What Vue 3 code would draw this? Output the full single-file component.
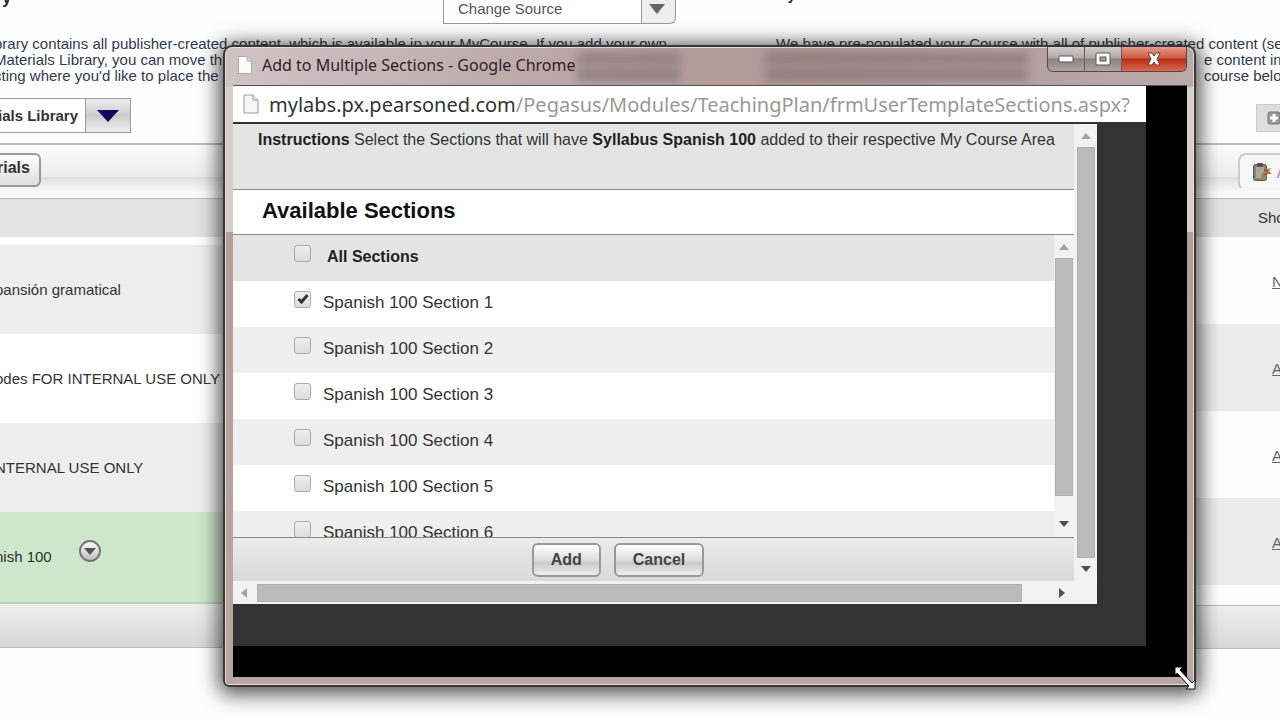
<script setup>
import { ref } from 'vue'

const sections = ref([
  { id: 'all', name: 'All Sections', checked: false },
  { id: 's1', name: 'Spanish 100 Section 1', checked: true },
  { id: 's2', name: 'Spanish 100 Section 2', checked: false },
  { id: 's3', name: 'Spanish 100 Section 3', checked: false },
  { id: 's4', name: 'Spanish 100 Section 4', checked: false },
  { id: 's5', name: 'Spanish 100 Section 5', checked: false },
  { id: 's6', name: 'Spanish 100 Section 6', checked: false },
])
const materials = ['pansión gramatical', 'odes FOR INTERNAL USE ONLY', 'NTERNAL USE ONLY']
const courseRows = ['N', 'A', 'A', 'A']
</script>

<template>
  <div class="desktop">
    <main class="page">
      <section class="library">
        <header class="intro">
          <div class="heading-row">
            <h2 class="heading">ry</h2>
            <div class="source">
              <select class="source-select" aria-label="Change Source">
                <option>Change Source</option>
              </select>
              <svg class="source-arrow" width="16" height="10" viewBox="0 0 16 10"><path d="M0 0H16L8 10Z" fill="#666" /></svg>
            </div>
          </div>
          <p class="blurb">brary contains all publisher-created content, which is available in your MyCourse. If you add your own<br>Materials Library, you can move th<br>cting where you'd like to place the</p>
          <div class="picker">
            <span class="picker-text">ials Library</span>
            <button class="picker-btn" type="button" aria-label="Choose library">
              <svg width="22" height="12" viewBox="0 0 22 12"><path d="M0 0H22L11 12Z" fill="#14085c" /></svg>
            </button>
          </div>
        </header>
        <nav class="toolbar"><button class="tab left-tab" type="button">rials</button></nav>
        <div class="colhead"></div>
        <ul class="materials">
          <li v-for="m in materials" :key="m">{{ m }}</li>
          <li class="selected">
            <span>nish 100</span>
            <button class="round" type="button" aria-label="Options">
              <svg width="24" height="24" viewBox="0 0 24 24">
                <defs><linearGradient id="rg" x1="0" y1="0" x2="0" y2="1"><stop offset="0" stop-color="#fff" /><stop offset="1" stop-color="#bbb" /></linearGradient></defs>
                <circle cx="12" cy="12" r="10" fill="url(#rg)" stroke="#777" stroke-width="2" />
                <path d="M6 9H18L12 16Z" fill="#555" />
              </svg>
            </button>
          </li>
        </ul>
        <div class="endbar"></div>
      </section>

      <section class="course">
        <header class="intro">
          <div class="heading-row"><h2 class="heading course-heading">My Course</h2></div>
          <p class="blurb">We have pre-populated your Course with all of publisher-created content (see</p>
          <p class="blurb tail">e content in th<br>course below</p>
          <div class="add-row">
            <button class="add" type="button" aria-label="Add content">
              <svg width="14" height="14" viewBox="0 0 14 14"><rect x="1" y="1" width="12" height="12" rx="2" fill="#999" stroke="#777" /><path d="M7 3V11M3 7H11" stroke="#fff" stroke-width="3" /></svg>
            </button>
          </div>
        </header>
        <nav class="toolbar">
          <button class="tab right-tab" type="button">
            <svg width="20" height="20" viewBox="0 0 20 20">
              <rect x="1.500" y="2.500" width="13" height="16" rx="2" fill="#85857d" stroke="#55544e" />
              <rect x="4" y="5" width="8" height="11" fill="#a9aaa3" />
              <rect x="5" y="1" width="6" height="4" rx="1" fill="#55504a" />
              <path d="M9 17L10 11L13 9L12 4L15 7L19 6L17 9L20 12L15 12L14 17Z" fill="#b57a48" />
              <path d="M12 8L16 9M12 13L16 11" stroke="#6c4a32" />
            </svg>
            <span>A</span>
          </button>
        </nav>
        <div class="colhead"><span>Show</span></div>
        <ul class="course-rows">
          <li v-for="(c, i) in courseRows" :key="i"><a href="#">{{ c }}</a></li>
        </ul>
        <div class="endbar"></div>
      </section>
    </main>

    <div class="window" role="dialog" aria-label="Add to Multiple Sections">
      <div class="smear smear-a"></div>
      <div class="smear smear-b"></div>
      <header class="titlebar">
        <svg class="doc" width="14" height="18" viewBox="0 0 14 18"><path d="M0.500 0.500H9L13.500 5V17.500H0.500Z" fill="#fbfbfb" stroke="#aaa" /><path d="M9 0.500V5H13.500" fill="#ddd" stroke="#aaa" /></svg>
        <h1 class="title">Add to Multiple Sections - Google Chrome</h1>
        <div class="controls">
          <button type="button" aria-label="Minimize"><svg width="16" height="8" viewBox="0 0 16 8"><rect x="1" y="1" width="14" height="6" rx="1" fill="#fff" stroke="#555" /></svg></button>
          <button type="button" aria-label="Maximize"><svg width="16" height="14" viewBox="0 0 16 14"><rect x="1" y="1" width="14" height="12" rx="1" fill="#fff" stroke="#555" /><rect x="5" y="5" width="6" height="4" fill="#a89b9b" stroke="#555" /></svg></button>
          <button class="close" type="button" aria-label="Close"><svg width="14" height="14" viewBox="0 0 14 14"><path d="M1 1H5L7 4L9 1H13L10 7L13 13H9L7 10L5 13H1L4 7Z" fill="#fff" stroke="#653c3c" /></svg></button>
        </div>
      </header>

      <div class="client">
        <div class="address">
          <svg class="doc" width="16" height="20" viewBox="0 0 16 20"><path d="M1 1H10L15 6V19H1Z" fill="#f6f6f6" stroke="#999" /><path d="M10 1V6H15" fill="#eee" stroke="#999" /></svg>
          <span class="url"><b>mylabs.px.pearsoned.com</b>/Pegasus/Modules/TeachingPlan/frmUserTemplateSections.aspx?</span>
        </div>
        <div class="backdrop">
          <div class="frame">
            <div class="body">
              <p class="instructions"><strong>Instructions</strong> Select the Sections that will have <strong>Syllabus Spanish 100</strong> added to their respective My Course Area</p>
              <h2 class="available">Available Sections</h2>
              <div class="list-wrap">
                <div class="list">
                  <label v-for="s in sections" :key="s.id" class="row">
                    <span class="box">
                      <input v-model="s.checked" type="checkbox">
                      <svg v-if="s.checked" class="tick" width="12" height="12" viewBox="0 0 12 12"><path d="M1.500 6L4.500 9L10.500 2" fill="none" stroke="#333" stroke-width="3" /></svg>
                    </span>
                    <span class="name">{{ s.name }}</span>
                  </label>
                </div>
                <div class="vbar inner-bar">
                  <svg width="10" height="6" viewBox="0 0 10 6"><path d="M0 6L5 0L10 6Z" fill="#a3a3a3" /></svg>
                  <div class="thumb"></div>
                  <svg width="10" height="6" viewBox="0 0 10 6"><path d="M0 0H10L5 6Z" fill="#505050" /></svg>
                </div>
              </div>
              <footer class="actions">
                <button type="button">Add</button>
                <button type="button">Cancel</button>
              </footer>
            </div>
            <div class="vbar outer-bar">
              <svg width="10" height="6" viewBox="0 0 10 6"><path d="M0 6L5 0L10 6Z" fill="#a3a3a3" /></svg>
              <div class="thumb"></div>
              <svg width="10" height="6" viewBox="0 0 10 6"><path d="M0 0H10L5 6Z" fill="#505050" /></svg>
            </div>
            <div class="hbar">
              <svg width="6" height="10" viewBox="0 0 6 10"><path d="M6 0L0 5L6 10Z" fill="#a3a3a3" /></svg>
              <div class="thumb"></div>
              <svg width="6" height="10" viewBox="0 0 6 10"><path d="M0 0L6 5L0 10Z" fill="#505050" /></svg>
            </div>
          </div>
        </div>
      </div>
      <svg class="cursor" width="22" height="24" viewBox="0 0 22 24">
        <path d="M1 1H9L6 4L18 17L21 14V23H12L15 20L3 7L1 9Z" fill="#fff" stroke="#111" />
      </svg>
    </div>
  </div>
</template>

<style>
body { background: #fff; overflow: hidden; }
</style>

<style scoped>
* { box-sizing: border-box; }
h1, h2, p, ul { margin: 0; padding: 0; }
ul { list-style: none; }
button, select, input { margin: 0; padding: 0; font: inherit; color: inherit; }
svg { display: block; flex: none; }
.desktop {
  position: relative;
  min-height: 100vh;
  overflow: hidden;
  background: #fefefe;
  font-family: "Liberation Sans", Arial, sans-serif;
  font-size: 15px;
  color: #333;
}
.page { display: grid; grid-template-columns: 680px 1fr; column-gap: 96px; min-width: 1280px; }
.library, .course { min-width: 0; white-space: nowrap; }
.intro { height: 143px; }
.heading-row { display: flex; height: 36px; }
.heading { width: 443px; font-size: 16px; line-height: 16px; margin-top: -9px; color: #222; }
.library .heading { text-indent: -4px; }
.course-heading { font-size: 14px; margin-top: -13px; }
.source { position: relative; width: 233px; height: 24px; }
.source-select {
  width: 100%;
  height: 100%;
  padding: 0 0 6px 14px;
  appearance: none;
  border: 1px solid #999;
  border-top: 0;
  border-radius: 0 0 6px 0;
  background: linear-gradient(90deg, #fff 197px, #999 197px, #999 198px, #eee 198px);
  font-size: 15px;
  color: #555;
}
.source-arrow { position: absolute; right: 11px; top: 4px; }
.blurb { line-height: 16px; color: #2f3b4b; }
.library .blurb { margin-left: -6px; }
.tail { padding-left: 428px; }
.picker { display: flex; height: 35px; width: 131px; margin-top: 14px; border: 1px solid #999; border-left: 0; background: #fff; }
.picker-text { flex: 1; font-weight: bold; line-height: 34px; text-indent: -2px; }
.picker-btn {
  width: 45px;
  border: 0;
  border-left: 1px solid #999;
  background: linear-gradient(#eee, #ccc 50%, #eee);
  display: grid;
  place-items: center;
}
.toolbar {
  height: 56px;
  border-top: 2px solid #bbb;
  border-bottom: 1px solid #bbb;
  background: linear-gradient(#fcfcfc, #ececec 60%, #dfdfdf 61%, #fbfbfb 90%);
  padding-top: 8px;
}
.tab { border: 2px solid #999; font-weight: bold; color: #333; }
.left-tab {
  width: 41px;
  height: 34px;
  border-left: 0;
  border-radius: 0 6px 6px 0;
  background: linear-gradient(#fff, #ddd);
  font-size: 16px;
  line-height: 26px;
  padding-bottom: 4px;
  text-align: left;
  text-indent: -3px;
}
.right-tab {
  display: flex;
  align-items: center;
  gap: 4px;
  width: 60px;
  height: 38px;
  margin-left: 462px;
  padding-left: 12px;
  border-color: #ccc;
  border-bottom-color: #f6f6f6;
  border-radius: 8px 0 0 8px;
  background: #f6f6f6;
  color: #b5a9bb;
}
.colhead { height: 38px; background: #e3e3e3; }
.course .colhead { padding-left: 482px; line-height: 38px; }
.materials { padding-top: 8px; }
.materials li { height: 89px; line-height: 89px; background: #eee; text-indent: -5px; }
.materials li:nth-child(2) { background: #fff; }
.materials .selected { display: flex; gap: 26px; height: 92px; background: #cfe8cd; border-bottom: 2px solid #bbd0bb; color: #263426; }
.round { align-self: flex-start; margin-top: 27px; line-height: 1; border: 0; background: none; }
.endbar { height: 44px; background: linear-gradient(#efefef, #d8d8d8); border-bottom: 1px solid #bbb; }
.course-rows { padding-bottom: 20px; }
.course-rows li { height: 87px; line-height: 90px; padding-left: 496px; }
.course-rows li:nth-child(even) { background: #ececec; }
.course-rows a { color: #666; }
.course .endbar { border-top: 1px solid #bbb; }
.add-row { display: flex; justify-content: flex-end; padding-top: 20px; }
.add { width: 24px; height: 28px; padding-left: 10px; border: 1px solid #ccc; border-right: 0; background: #dedede; }

.window {
  position: absolute;
  top: 45px;
  left: 223px;
  right: 84px;
  padding: 0 7px 8px 8px;
  border: 2px solid #3b3639;
  border-radius: 9px 9px 6px 6px;
  background:
    linear-gradient(90deg, #cfc4c5, #b7a2a1 40%, #b19996 60%, #b9a9a8) 0 0 / 100% 40px no-repeat,
    linear-gradient(#d5cfcf 185px, #b39c9d 185px, #b9a7a7);
  box-shadow: inset 0 0 0 1px #e5dbdb, 0 3px 20px 4px rgba(0, 0, 0, 0.7);
}
.smear { position: absolute; height: 28px; top: 6px; background: repeating-linear-gradient(#75666b 0 9px, #a99391 12px 17px); filter: blur(5px); opacity: 0.6; }
.smear-a { left: 352px; width: 104px; }
.smear-b { left: 540px; width: 264px; }
.titlebar { position: relative; display: flex; align-items: center; height: 38px; padding: 0 0 2px 5px; }
.title {
  flex: 1;
  padding-left: 10px;
  font: 400 16px "Noto Sans", "Open Sans", sans-serif;
  color: #30202c;
  white-space: nowrap;
}
.controls { align-self: flex-start; display: flex; height: 25px; border: 1px solid #50484a; border-top: 0; border-radius: 0 0 6px 6px; overflow: hidden; }
.controls button {
  display: grid;
  place-items: center;
  width: 37px;
  border: 0;
  border-right: 1px solid #665c5e;
  background: linear-gradient(#d3cccc, #b3a9a9 45%, #8d8181 50%, #aea3a3);
}
.controls .close { width: 64px; border: 0; background: linear-gradient(#e39a8a, #cf5b45 45%, #b92c14 50%, #d96a50); }
.client { position: relative; background: #000; border-top: 1px solid #555; padding: 0 41px 31px 0; }
.address {
  display: flex;
  align-items: center;
  gap: 10px;
  height: 38px;
  padding-left: 10px;
  background: #fff;
  border-bottom: 2px solid #333;
  overflow: hidden;
}
.url { font: 400 20px "Noto Sans", "Open Sans", sans-serif; color: #999; white-space: nowrap; }
.url b { font-weight: 400; color: #333; }
.backdrop { background: #333; padding: 0 49px 42px 0; }
.frame { display: grid; grid-template-columns: minmax(0, 1fr) 23px; background: #f3f3f3; }
.instructions {
  height: 66px;
  padding: 6px 0 0 25px;
  background: #e4e4e4;
  border-bottom: 1px solid #888;
  font-size: 16px;
  line-height: 20px;
  white-space: nowrap;
  overflow: hidden;
}
.instructions strong { color: #222; }
.available { height: 45px; padding-left: 29px; background: #fff; border-bottom: 1px solid #888; font-size: 22px; line-height: 42px; color: #111; }
.list-wrap { display: flex; height: 303px; border-bottom: 1px solid #888; }
.list { flex: 1; overflow: hidden; }
.row { display: flex; height: 46px; padding-left: 61px; background: #efefef; font-size: 17px; }
.row:nth-child(even) { background: #fff; }
.row:first-child { background: #e4e4e4; }
.row:first-child .name { font-size: 16px; font-weight: bold; padding-left: 4px; color: #222; }
.box { position: relative; width: 17px; height: 17px; margin: 10px 12px 0 0; }
.box input { display: block; appearance: none; width: 17px; height: 17px; border: 1px solid #aaa; border-radius: 3px; background: linear-gradient(#eee, #ddd); }
.tick { position: absolute; left: 3px; top: 2px; }
.name { line-height: 44px; }
.vbar { display: flex; flex-direction: column; align-items: center; gap: 8px; background: #f2f2f2; }
.inner-bar { width: 20px; padding: 9px 0 10px; }
.outer-bar { padding: 9px 0; }
.thumb { background: #bbb; border: 1px solid #b0b0b0; flex: 1; }
.vbar .thumb { width: 18px; }
.inner-bar .thumb { margin-bottom: 17px; }
.hbar { display: flex; align-items: center; gap: 10px; height: 23px; padding: 0 9px 0 8px; background: #f2f2f2; }
.hbar .thumb { height: 18px; margin-right: 27px; }
.actions { display: flex; justify-content: center; gap: 13px; height: 43px; padding: 5px 71px 0 0; background: linear-gradient(#ececec, #d9d9d9); }
.actions button {
  height: 34px;
  padding: 0 17px;
  border: 2px solid #999;
  border-radius: 6px;
  background: linear-gradient(#fff, #ddd 50%, #cacaca 60%, #eee);
  font-size: 16px;
  line-height: 26px;
  font-weight: bold;
  color: #444;
}
.cursor { position: absolute; right: -2px; bottom: -5px; }
</style>
